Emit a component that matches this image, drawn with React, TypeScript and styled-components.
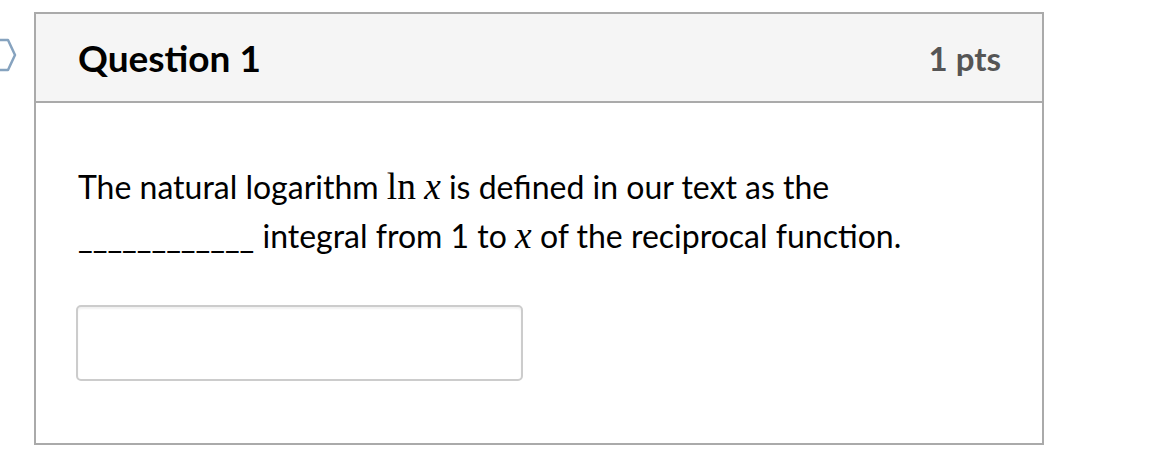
import styled, { createGlobalStyle } from 'styled-components'

const GlobalStyle = createGlobalStyle`
    body {
        margin: 0;
        background: #ffffff;
        font-family: Lato, "Open Sans", sans-serif;
        color: #000000;
    }
`

const Page = styled.div`
    position: relative;
    padding: 12px 0 0 34px;
`

const Flag = styled.svg`
    position: absolute;
    left: -6px;
    top: 38px;
`

const Card = styled.section`
    width: 1006px;
    border: 2px solid #aaaaaa;
    background: #ffffff;
`

const Header = styled.header`
    height: 87px;
    display: flex;
    align-items: center;
    justify-content: space-between;
    padding: 0 41px 0 42px;
    background: #f5f5f5;
    border-bottom: 2px solid #aaaaaa;
`

const Title = styled.h2`
    margin: 0;
    font-size: 37px;
    font-weight: 700;
    color: #000000;
`

const Points = styled.span`
    font-size: 33px;
    font-weight: 700;
    color: #555555;
`

const Body = styled.div`
    padding: 59px 42px 62px 42px;
`

const Prompt = styled.p`
    margin: 0;
    font-size: 32px;
    line-height: 49px;
`

const Math = styled.span<{ $italic?: boolean }>`
    font-family: "Liberation Serif", "DejaVu Serif", serif;
    font-size: 1.17em;
    font-style: ${p => (p.$italic ? 'italic' : 'normal')};
`

const Answer = styled.input`
    display: block;
    box-sizing: border-box;
    width: 447px;
    height: 76px;
    margin: 45px 0 0 -2px;
    border: 2px solid #cccccc;
    border-radius: 5px;
    box-shadow: inset 0 2px 2px rgba(0, 0, 0, 0.06);
    background: #ffffff;
    outline: none;
`

export default function App() {
    return (
        <>
            <GlobalStyle />
            <Page>
                <Flag width="24" height="36" viewBox="0 0 24 36">
                    <path
                        d="M2 2 H14 L21 17 L14 32 H2"
                        fill="none"
                        stroke="#86a3bf"
                        strokeWidth="2.5"
                        strokeLinejoin="round"
                    />
                </Flag>
                <Card>
                    <Header>
                        <Title>Question 1</Title>
                        <Points>1 pts</Points>
                    </Header>
                    <Body>
                        <Prompt>
                            The natural logarithm <Math>ln</Math> <Math $italic>x</Math> is defined in our text as the
                            <br />
                            ____________ integral from 1 to <Math $italic>x</Math> of the reciprocal function.
                        </Prompt>
                        <Answer type="text" aria-label="Answer" />
                    </Body>
                </Card>
            </Page>
        </>
    )
}
